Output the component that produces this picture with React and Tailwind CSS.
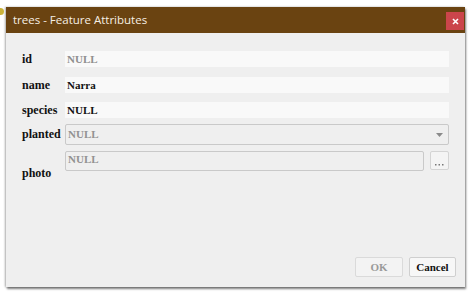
import React from 'react';

const serif = { fontFamily: '"Liberation Serif", "Times New Roman", serif' };

function Field({ value, dim }) {
  return (
    <div
      className={`h-4 flex-1 bg-[#f9f9f9] pl-[2px] flex items-center text-[11px] font-bold ${dim ? 'text-[#8f8f8f]' : 'text-[#111]'}`}
    >
      {value}
    </div>
  );
}

export default function App() {
  return (
    <div className="relative w-[474px] h-[294px] bg-white overflow-hidden" style={serif}>
      {/* stray marker at the corner */}
      <div className="absolute left-[-3px] top-[8px] w-[7px] h-[7px] rounded-full bg-[#c9b23a]" />

      <div className="pl-[6px] pt-[7px]">
        <div className="w-[459px] h-[280px] bg-[#efefef] flex flex-col shadow-[1px_2px_2px_rgba(0,0,0,0.5),-1px_0_2px_rgba(0,0,0,0.3)]">
          {/* Title bar */}
          <div className="h-[26px] bg-[#6a4311] flex items-center justify-between pl-[7px] pr-[1px]">
            <span
              className="text-[11.5px] text-[#f6efe4]"
              style={{ fontFamily: '"Open Sans", "Liberation Sans", sans-serif' }}
            >
              trees - Feature Attributes
            </span>
            <button className="w-[18px] h-[18px] mt-[2px] bg-[#cb454b] flex items-center justify-center">
              <svg width="7" height="7" viewBox="0 0 7 7">
                <path d="M1 1L6 6M6 1L1 6" stroke="#fff" strokeWidth="1.6" />
              </svg>
            </button>
          </div>

          {/* Form */}
          <div className="flex-1 flex flex-col pl-[16px] pr-[16px] pt-[17px]">
            <div className="flex items-baseline h-4">
              <span className="w-[43px] text-[12px] font-bold text-[#111]">id</span>
              <Field value="NULL" dim />
            </div>
            <div className="flex items-baseline h-4 mt-[10px]">
              <span className="w-[43px] text-[12px] font-bold text-[#111]">name</span>
              <Field value="Narra" />
            </div>
            <div className="flex items-baseline h-4 mt-[9px]">
              <span className="w-[43px] text-[12px] font-bold text-[#111]">species</span>
              <Field value="NULL" />
            </div>
            <div className="flex items-baseline h-[21px] mt-[7px]">
              <span className="w-[43px] text-[12px] font-bold text-[#111]">planted</span>
              <div className="flex-1 h-full border border-[#c9c9c9] rounded-[2px] bg-[#efefef] flex items-center justify-between pl-[2px] pr-[5px]">
                <span className="text-[11px] font-bold text-[#929292]">NULL</span>
                <svg width="7" height="4" viewBox="0 0 7 4">
                  <path d="M0 0H7L3.5 4Z" fill="#8a8a8a" />
                </svg>
              </div>
            </div>
            <div className="flex mt-[6px]">
              <span className="w-[43px] text-[12px] font-bold text-[#111] mt-[13px]">photo</span>
              <div className="flex-1 h-[20px] border border-[#c9c9c9] rounded-[2px] bg-[#efefef] pl-[2px] text-[11px] font-bold text-[#929292] leading-[14px]">
                NULL
              </div>
              <button className="ml-[6px] w-[19px] h-[19px] border border-[#d4d4d4] rounded-[2px] bg-[#f4f4f4] flex items-end justify-center pb-[3px]">
                <svg width="9" height="2" viewBox="0 0 9 2">
                  <rect x="0" y="0" width="1.5" height="1.5" fill="#777" />
                  <rect x="3.5" y="0" width="1.5" height="1.5" fill="#777" />
                  <rect x="7" y="0" width="1.5" height="1.5" fill="#777" />
                </svg>
              </button>
            </div>
          </div>

          {/* Buttons */}
          <div className="flex justify-end gap-[6px] pr-[9px] pb-[10px]">
            <button className="w-[48px] h-[20px] border border-[#dadada] rounded-[2px] bg-[#f3f3f3] text-[11px] font-bold text-[#9a9a9a]">
              OK
            </button>
            <button className="w-[47px] h-[20px] border border-[#cfcfcf] rounded-[2px] bg-[#f7f7f7] text-[11px] font-bold text-[#111]">
              Cancel
            </button>
          </div>
        </div>
      </div>
    </div>
  );
}
